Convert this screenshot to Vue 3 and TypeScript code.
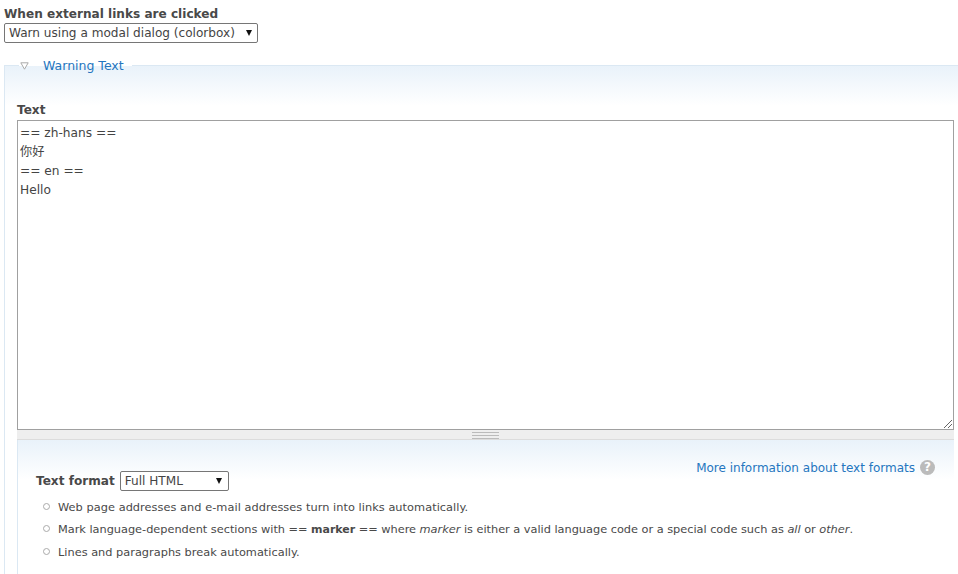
<script setup lang="ts">
const tips = [
  'Web page addresses and e-mail addresses turn into links automatically.',
  'Lines and paragraphs break automatically.',
]
</script>

<template>
  <div class="page">
    <label class="lbl first" for="when">When external links are clicked</label>
    <div class="fakeselect wide" id="when">
      <span>Warn using a modal dialog (colorbox)</span><i class="arrow"></i>
    </div>

    <fieldset class="fs">
      <legend class="legend">
        <svg class="tri" width="9" height="8" viewBox="0 0 9 8"><path d="M0.8 0.8H8.2L4.5 7.2Z" fill="#fff" stroke="#aaa" stroke-width="1"/></svg>
        <a class="link">Warning Text</a>
      </legend>

      <label class="lbl textlabel">Text</label>
      <div class="textarea">
        <div>== zh-hans ==</div>
        <div class="cjk">你好</div>
        <div>== en ==</div>
        <div>Hello</div>
        <svg class="resizer" width="10" height="10" viewBox="0 0 10 10">
          <path d="M1 9L9 1M5 9L9 5" stroke="#666" stroke-width="1" fill="none"/>
        </svg>
      </div>
      <div class="grip"><span class="griplines"></span></div>

      <div class="format">
        <div class="helprow">
          <a class="link">More information about text formats</a>
          <span class="help">?</span>
        </div>
        <div class="formatrow">
          <span class="lbl">Text format</span>
          <div class="fakeselect narrow"><span>Full HTML</span><i class="arrow"></i></div>
        </div>
        <ul class="tips">
          <li>{{ tips[0] }}</li>
          <li>Mark language-dependent sections with == <b>marker</b> == where <em>marker</em> is either a valid language code or a special code such as <em>all</em> or <em>other</em>.</li>
          <li>{{ tips[1] }}</li>
        </ul>
      </div>
    </fieldset>
  </div>
</template>

<style>
html, body { margin: 0; overflow: hidden; background: #fff; }
</style>

<style scoped>
.page {
  width: 958px;
  height: 574px;
  overflow: hidden;
  box-sizing: border-box;
  padding: 5px 0 0 4px;
  font-family: "DejaVu Sans", Verdana, sans-serif;
  font-size: 12px;
  color: #494949;
}
.lbl {
  display: block;
  font-weight: bold;
  font-size: 12.1px;
  line-height: 18px;
  color: #494949;
}
.first { height: 18px; }
.fakeselect {
  box-sizing: border-box;
  display: flex;
  align-items: center;
  justify-content: space-between;
  height: 20px;
  border: 1px solid #767676;
  border-radius: 2px;
  background: #fff;
  font-size: 12.1px;
  padding: 0 5.5px 0 4px;
  color: #444;
}
.wide { width: 254px; }
.narrow { width: 109px; margin-left: 5px; }
.arrow {
  width: 0;
  height: 0;
  border-left: 3.5px solid transparent;
  border-right: 3.5px solid transparent;
  border-top: 6px solid #111;
}
.fs {
  margin: 14px -40px 0 0;
  padding: 0 0 40px 12px;
  min-width: 0;
  border: 1px solid #dbe8f3;
  border-right: 0;
  border-bottom: 0;
  background: linear-gradient(#e9f2fa, #fff 40px) no-repeat;
}
.legend {
  margin-left: 2px;
  padding: 0 8px 0 1px;
  display: flex;
  align-items: center;
  height: 17px;
  font-size: 12.5px;
}
.tri { margin-right: 14px; margin-top: 1px; }
.link { color: #2576bf; }
.textlabel { margin-top: 27px; height: 19px; line-height: 18px; }
.textarea {
  position: relative;
  box-sizing: border-box;
  width: 937px;
  height: 310px;
  border: 1px solid #a0a0a0;
  padding: 3px 2px;
  line-height: 19px;
  background: #fff;
  font-size: 12.2px;
  color: #444;
}
.cjk { font-family: "DejaVu Sans", "Noto Sans CJK SC", sans-serif; }
.resizer { position: absolute; right: 0; bottom: 0; }
.grip {
  box-sizing: border-box;
  width: 937px;
  height: 10px;
  background: #eee;
  border-bottom: 1px solid #dcdcdc;
  display: flex;
  justify-content: center;
  padding-top: 2px;
}
.griplines {
  width: 27px;
  height: 5px;
  border-top: 1px solid #bbb;
  border-bottom: 1px solid #bbb;
  background: linear-gradient(#bbb, #bbb) center / 100% 1px no-repeat;
}
.format {
  position: relative;
  box-sizing: border-box;
  width: 937px;
  padding: 29px 0 30px 18px;
  border-left: 1px solid #dbe8f3;
  background: linear-gradient(#e9f2fa, #fff 40px) no-repeat;
}
.helprow {
  position: absolute;
  top: 20px;
  right: 19px;
  display: flex;
  align-items: center;
  gap: 5px;
  font-size: 12px;
}
.help {
  width: 15px;
  height: 15px;
  border-radius: 50%;
  background: #bbb;
  color: #fff;
  font-weight: bold;
  font-size: 12px;
  line-height: 15px;
  text-align: center;
}
.formatrow { display: flex; align-items: center; height: 24px; }
.tips {
  list-style: none;
  margin: 3px 0 0;
  padding: 0 0 0 22px;
  font-size: 11.35px;
  color: #494949;
}
.tips li {
  position: relative;
  height: 22px;
  line-height: 22px;
}
.tips li:nth-child(1) { letter-spacing: 0.04px; }
.tips li:nth-child(2) { height: 23px; letter-spacing: -0.025px; }
.tips b { font-size: 11px; }
.tips li::before {
  content: "";
  position: absolute;
  left: -15px;
  top: 7px;
  width: 7px;
  height: 7px;
  box-sizing: border-box;
  border: 1px solid #aaa;
  border-radius: 50%;
  background: #fff;
}
</style>
